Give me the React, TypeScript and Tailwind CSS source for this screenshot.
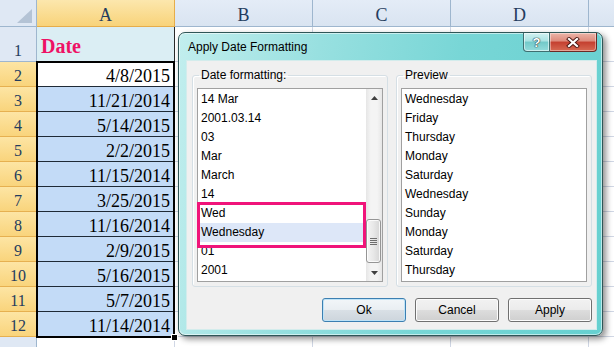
import React from "react";

const dates = [
  "4/8/2015",
  "11/21/2014",
  "5/14/2015",
  "2/2/2015",
  "11/15/2014",
  "3/25/2015",
  "11/16/2014",
  "2/9/2015",
  "5/16/2015",
  "5/7/2015",
  "11/14/2014",
];
const formats = ["14 Mar", "2001.03.14", "03", "Mar", "March", "14", "Wed", "Wednesday", "01", "2001"];
const preview = ["Wednesday", "Friday", "Thursday", "Monday", "Saturday", "Wednesday", "Sunday", "Monday", "Saturday", "Thursday"];

function Arrow({ up }: { up: boolean }) {
  return (
    <svg width="7" height="4" viewBox="0 0 7 4">
      <polygon points={up ? "3.5,0 7,4 0,4" : "0,0 7,0 3.5,4"} fill="#404040" />
    </svg>
  );
}

function Btn({ label, def }: { label: string; def?: boolean }) {
  return (
    <button
      className={
        "w-[84px] h-[24px] rounded-[3px] border text-[12px] leading-[22px] text-black text-center " +
        (def
          ? "border-[#3c7fb1] bg-[linear-gradient(#f2f6f9_0%,#e9eef2_50%,#d9e0e6_50%,#cdd5dc_100%)] shadow-[inset_0_0_0_1px_#bfe3f7]"
          : "border-[#707070] bg-[linear-gradient(#f2f2f2_0%,#ebebeb_50%,#dddddd_50%,#cfcfcf_100%)] shadow-[inset_0_0_0_1px_#fcfcfc]")
      }
    >
      {label}
    </button>
  );
}

export default function App() {
  const hdr = "w-[138px] shrink-0 flex items-end justify-center pb-0 bg-[linear-gradient(#e4ecf7,#d9e4f1)] border-r border-b border-[#9eb6ce] text-[18px] leading-[22px] text-[#243c5e]";
  const grid = "w-[138px] shrink-0 border-r border-b border-[#d0d7e5]";
  return (
    <div className="relative w-[614px] h-[347px] overflow-hidden bg-white font-['Liberation_Serif',serif]">
      {/* column headers */}
      <div className="flex h-[27px]">
        <div className="w-[37px] shrink-0 flex items-end justify-end pr-[4px] pb-[3px] bg-[#dfe8f4] border-r border-b border-[#9eb6ce]">
          <svg width="15" height="14" viewBox="0 0 15 14">
            <polygon points="15,0 15,14 0,14" fill="#b4c3d5" />
          </svg>
        </div>
        <div className="w-[138px] shrink-0 flex items-end justify-center bg-[linear-gradient(#fce7ad,#f8d37a)] border-r border-b border-[#e6ad4a] text-[18px] leading-[22px] text-[#243c5e]">
          A
        </div>
        {["B", "C", "D"].map((c) => (
          <div key={c} className={hdr}>
            {c}
          </div>
        ))}
        <div className="flex-1 bg-[linear-gradient(#e4ecf7,#d9e4f1)] border-b border-[#9eb6ce]" />
      </div>

      {/* row 1 */}
      <div className="flex h-[35px]">
        <div className="w-[37px] shrink-0 flex items-end justify-center bg-[#dfe8f4] border-r border-b border-[#9eb6ce] text-[16px] leading-[20px] text-[#243c5e]">
          1
        </div>
        <div className="w-[138px] shrink-0 flex items-end pl-[4px] pb-[3px] bg-[#dbeef4] border-r border-b border-r-[#2a2a2a] border-b-[#d0d7e5]">
          <span className="text-[20px] leading-[23px] font-bold text-[#ee1265]">Date</span>
        </div>
        <div className={grid} />
        <div className={grid} />
        <div className={grid} />
        <div className="flex-1 border-b border-[#d0d7e5]" />
      </div>

      {/* rows 2-12 */}
      {dates.map((d, i) => (
        <div key={i} className="flex h-[25px]">
          <div className="w-[37px] shrink-0 flex items-end justify-center bg-[linear-gradient(#fde5a4,#f9d47c)] border-r border-b border-[#e6b050] text-[16px] leading-[20px] text-[#243c5e]">
            {i + 2}
          </div>
          <div
            className={
              "w-[138px] shrink-0 flex items-end justify-end pr-[4px] border-r border-b border-[#1f2a36] text-[18px] leading-[20px] text-black " +
              (i === 0 ? "bg-white" : "bg-[#c3dbf7]")
            }
          >
            {d}
          </div>
          <div className={grid} />
          <div className={grid} />
          <div className={grid} />
          <div className="flex-1 border-b border-[#d0d7e5]" />
        </div>
      ))}

      {/* row 13 (partial) */}
      <div className="flex h-[12px]">
        <div className="w-[37px] shrink-0 bg-[#dfe8f4] border-r border-[#9eb6ce]" />
        <div className="w-[138px] shrink-0 border-r border-[#d0d7e5]" />
        <div className="w-[138px] shrink-0 border-r border-[#d0d7e5]" />
        <div className="w-[138px] shrink-0 border-r border-[#d0d7e5]" />
        <div className="w-[138px] shrink-0 border-r border-[#d0d7e5]" />
        <div className="flex-1" />
      </div>

      {/* selection outline + fill handle */}
      <div className="absolute left-[36px] top-[61px] w-[139px] h-[277px] border-2 border-black pointer-events-none" />
      <div className="absolute left-[171px] top-[334px] w-[7px] h-[7px] bg-black border border-white" />

      {/* dialog */}
      <div className="absolute left-[178px] top-[32px] w-[425px] h-[304px] rounded-[7px] border border-[#2f5657] bg-[linear-gradient(100deg,#c2eeee_0%,#98e0e0_30%,#78d6d6_60%,#66d0d0_100%)] shadow-[inset_0_0_0_1px_rgba(255,255,255,0.55),3px_3px_6px_rgba(0,0,0,0.45)] flex flex-col pl-[7px] pr-[5px] pb-[5px] font-['Liberation_Sans',Arial,sans-serif]">
        {/* title bar */}
        <div className="h-[27px] flex items-start">
          <span className="pl-[2px] pt-[7px] text-[12px] leading-[14px] text-black">Apply Date Formatting</span>
          <div className="ml-auto flex">
            <div className="w-[27px] h-[19px] rounded-bl-[4px] border border-t-0 border-[#3f6e70] bg-[linear-gradient(#d2f1f1_0%,#a9e2e2_45%,#72c9c9_50%,#94dcdc_100%)] shadow-[inset_0_0_0_1px_rgba(255,255,255,0.55)] flex items-center justify-center">
              <span className="text-[13px] leading-[13px] font-bold text-white [text-shadow:0_0_1px_#1b3d3f,0_0_1px_#1b3d3f,0_0_1px_#1b3d3f]">?</span>
            </div>
            <div className="w-[47px] h-[19px] rounded-br-[4px] border border-l-0 border-t-0 border-[#6b2a25] bg-[linear-gradient(#ebb4a8_0%,#dd8a7b_45%,#c43f2f_50%,#d66a53_100%)] shadow-[inset_0_0_0_1px_rgba(255,255,255,0.4)] flex items-center justify-center">
              <svg width="14" height="11" viewBox="0 0 14 11">
                <path d="M3 2 L11 9 M11 2 L3 9" stroke="#4a1612" strokeWidth="4" strokeLinecap="square" />
                <path d="M3 2 L11 9 M11 2 L3 9" stroke="#ffffff" strokeWidth="2.2" strokeLinecap="square" />
              </svg>
            </div>
          </div>
        </div>

        {/* client area */}
        <div className="flex-1 bg-[#f0f0f0] border border-[#d3ecec] flex flex-col pl-[5px] pr-[4px] pt-[7px] text-[12px] text-black">
          <div className="flex gap-[8px]">
            {/* Date formatting group */}
            <fieldset className="w-[196px] h-[219px] border border-[#d5dfe5] rounded-[3px] px-[4px] pb-[4px] shadow-[inset_1px_1px_0_#ffffff]">
              <legend className="ml-[2px] px-[2px] text-[12px] leading-[14px]">Date formatting:</legend>
              <div className="mt-[6px] h-[194px] border border-[#a0a0a0] bg-white flex">
                <div className="flex-1 pt-[1px]">
                  {formats.map((f, i) => (
                    <div key={i} className={"h-[19px] leading-[19px] pl-[3px] " + (i === 7 ? "bg-[#dde7f8]" : "")}>
                      {f}
                    </div>
                  ))}
                </div>
                <div className="w-[16px] flex flex-col bg-[linear-gradient(90deg,#e6e6e6,#f4f4f4_30%,#f4f4f4_70%,#e6e6e6)]">
                  <div className="h-[17px] flex items-center justify-center">
                    <Arrow up />
                  </div>
                  <div className="mt-[113px] h-[44px] mr-[1px] rounded-[3px] border border-[#959595] bg-[linear-gradient(90deg,#f4f4f4,#e8e8e8_50%,#d6d6d6)] shadow-[inset_0_0_0_1px_rgba(255,255,255,0.8)] flex flex-col items-center justify-center gap-[1px]">
                    <div className="w-[7px] h-[1px] bg-[#6e6e6e]" />
                    <div className="w-[7px] h-[1px] bg-[#6e6e6e]" />
                    <div className="w-[7px] h-[1px] bg-[#6e6e6e]" />
                    <div className="w-[7px] h-[1px] bg-[#6e6e6e]" />
                  </div>
                  <div className="flex-1" />
                  <div className="h-[17px] flex items-center justify-center">
                    <Arrow up={false} />
                  </div>
                </div>
              </div>
            </fieldset>

            {/* Preview group */}
            <fieldset className="w-[196px] h-[219px] border border-[#d5dfe5] rounded-[3px] px-[4px] pb-[4px] shadow-[inset_1px_1px_0_#ffffff]">
              <legend className="ml-[2px] px-[2px] text-[12px] leading-[14px]">Preview</legend>
              <div className="mt-[6px] h-[194px] border border-[#a0a0a0] bg-white pt-[1px]">
                {preview.map((p, i) => (
                  <div key={i} className="h-[19px] leading-[19px] pl-[3px]">
                    {p}
                  </div>
                ))}
              </div>
            </fieldset>
          </div>

          <div className="mt-[11px] flex justify-end gap-[9px]">
            <Btn label="Ok" def />
            <Btn label="Cancel" />
            <Btn label="Apply" />
          </div>
        </div>
      </div>

      {/* annotation highlight */}
      <div className="absolute left-[197px] top-[202px] w-[169px] h-[46px] border-[3px] border-[#f0147a] pointer-events-none" />
    </div>
  );
}
